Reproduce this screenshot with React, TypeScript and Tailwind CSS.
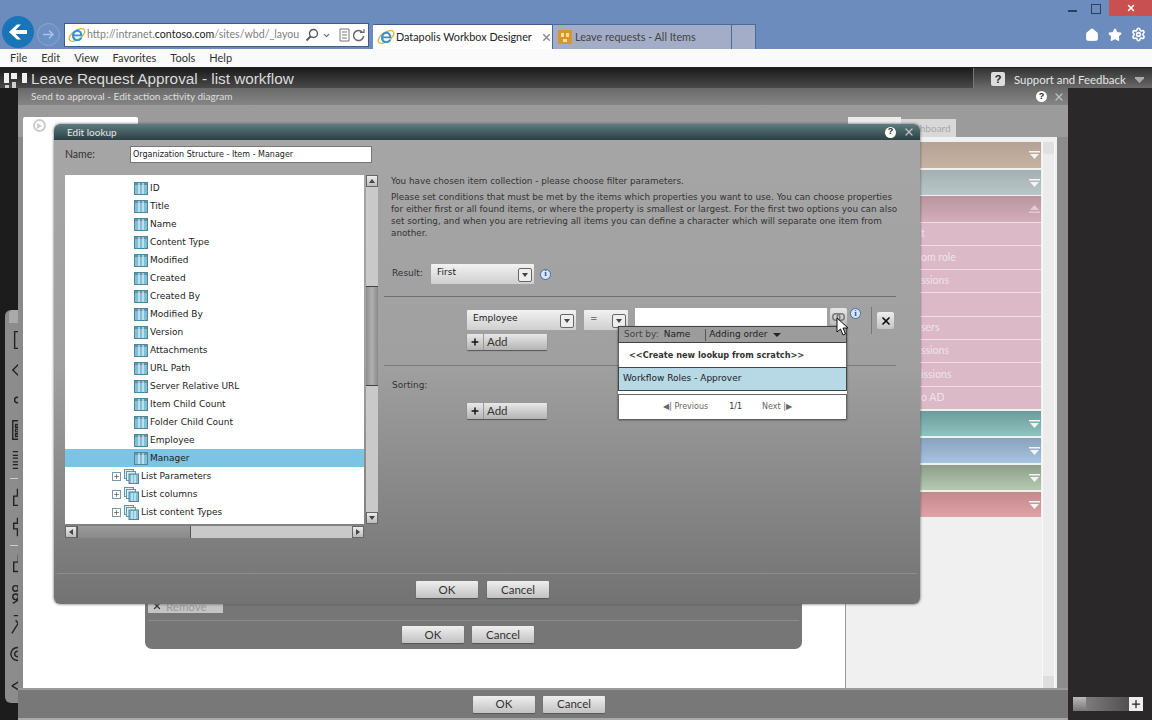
import { ChevronDown, House, Plus, Settings, Star, X } from "lucide-react";

const ui = "font-['DejaVu_Sans',sans-serif]";
const seg = "font-['Lato',sans-serif]";

const treeFields = [
  "ID",
  "Title",
  "Name",
  "Content Type",
  "Modified",
  "Created",
  "Created By",
  "Modified By",
  "Version",
  "Attachments",
  "URL Path",
  "Server Relative URL",
  "Item Child Count",
  "Folder Child Count",
  "Employee",
  "Manager",
];

const accordions = [
  { cls: "h-[26px] mb-[2px] from-[#b3a296] to-[#c8b3a1]" },
  { cls: "h-[25px] mb-px from-[#a5afb2] to-[#b9c7c8]" },
];

const lowerAccordions = [
  "h-[25px] mb-[2px] from-[#6d9b9b] to-[#8ec4c0]",
  "h-[25px] mb-[2px] from-[#8aa2bd] to-[#a7c3e0]",
  "h-[25px] mb-[2px] from-[#8d9e8a] to-[#b6cab2]",
  "h-[25px] from-[#c2898b] to-[#e0a3a8]",
];

const pinkRows = ["t", "om role", "ssions", "", "sers", "ssions", "issions", "o AD"];

function IeLogo({ size = 18 }: { size?: number }) {
  return (
    <svg width={size} height={size} viewBox="0 0 20 20" className="shrink-0">
      <ellipse cx="10" cy="10" rx="10" ry="5" transform="rotate(-35 10 10)" fill="none" stroke="#e0b84a" strokeWidth="1.6" />
      <path
        d="M16 11.5H7c.2 2 1.6 3.2 3.4 3.2 1.4 0 2.4-.6 3-1.7h2.5c-.8 2.4-2.9 3.8-5.5 3.8C6.800 16.800 4.500 14.300 4.500 10.700 4.500 7 6.900 4.300 10.300 4.300c3.500 0 5.800 2.700 5.700 7.200ZM7.100 9.500h6.400c-.2-1.800-1.500-3-3.100-3-1.700 0-3 1.200-3.300 3Z"
        fill="#2f93d8"
      />
    </svg>
  );
}

function BrowserBar() {
  return (
    <div className="h-[49px] bg-[#6c8cbe] flex items-end shrink-0 relative">
      <div className="w-[32px] h-[32px] ml-[2px] mb-px rounded-full bg-[#1a75b8] flex items-center justify-center shrink-0">
        <svg width="22" height="18" viewBox="0 0 22 18">
          <path d="M2 9 10 1.500h4L8.500 7H20v4H8.500l5.500 5.500h-4Z" fill="#fff" />
        </svg>
      </div>
      <div className="w-[23px] h-[23px] ml-[3px] mb-[3px] rounded-full border border-[#8aa6d0] bg-[#6a90c6] flex items-center justify-center shrink-0">
        <svg width="13" height="11" viewBox="0 0 13 11">
          <path d="M1 5.500h10M7 1.500l4 4-4 4" fill="none" stroke="#a9c3e6" strokeWidth="1.500" />
        </svg>
      </div>
      <div className="w-[305px] h-[24px] ml-[4px] mb-[2px] bg-white border border-[#3f5d8a] flex items-center pl-[3px] shrink-0">
        <IeLogo />
        <span className={`${seg} text-[10.600px] text-[#7f7f7f] ml-px w-[218px] whitespace-nowrap`}>
          http://intranet.<span className="text-[#222]">contoso.com</span>/sites/wbd/_layou
        </span>
        <svg width="14" height="14" viewBox="0 0 14 14" className="shrink-0">
          <circle cx="8.500" cy="5.500" r="4" fill="none" stroke="#555" strokeWidth="1.400" />
          <path d="M5.500 8.500 1.500 12.500" stroke="#555" strokeWidth="1.800" />
        </svg>
        <ChevronDown size={9} className="text-[#666] ml-[3px] shrink-0" strokeWidth={3} />
        <svg width="11" height="14" viewBox="0 0 11 14" className="ml-[8px] shrink-0">
          <path d="M1 1h9v12H1Z" fill="none" stroke="#777" />
          <path d="M3 4h5M3 7h5M3 10h5" stroke="#777" />
        </svg>
        <svg width="13" height="13" viewBox="0 0 13 13" className="ml-[2px] shrink-0">
          <path d="M10.500 3.500A5 5 0 1 0 11.500 7" fill="none" stroke="#666" strokeWidth="1.500" />
          <path d="M8 3.500h4V0" fill="none" stroke="#666" strokeWidth="1.200" />
        </svg>
      </div>
      <div className="w-[179px] h-[25px] ml-[4px] bg-white border-t border-[#3f5d8a] flex items-center pl-[4px] shrink-0">
        <IeLogo />
        <span className={`${seg} text-[10.800px] text-[#222] ml-[1px] w-[149px] whitespace-nowrap`}>Datapolis Workbox Designer</span>
        <X size={11} className="text-[#8a8a8a] shrink-0" strokeWidth={3} />
      </div>
      <div className="w-[180px] h-[25px] bg-[#a3adc8] border border-b-0 border-[#4b6a98] flex items-center pl-[5px] shrink-0">
        <svg width="14" height="14" viewBox="0 0 14 14">
          <rect width="14" height="14" rx="1" fill="#d8962f" />
          <path d="M3 3h3v4H3ZM8 3h3v4H8ZM5 9h4v3H5Z" fill="#f8e08a" />
        </svg>
        <span className={`${seg} text-[10.800px] text-[#444] ml-[3px] whitespace-nowrap`}>Leave requests - All Items</span>
      </div>
      <div className="w-[24px] h-[25px] bg-[#a3adc8] border border-l-0 border-b-0 border-[#4b6a98] shrink-0" />
      <div className="absolute right-0 top-0 h-[17px] flex items-start">
        <div className="w-[9px] h-[2px] bg-[#2d3f5c] mt-[10px]" />
        <div className="w-[10px] h-[10px] border border-[#2d3f5c] mt-[4px] ml-[14px]" />
        <div className="w-[43px] h-[16px] bg-[#c95050] ml-[8px] flex items-center justify-center">
          <X size={10} className="text-white" strokeWidth={3.500} />
        </div>
      </div>
      <div className="absolute right-[6px] top-[27px] flex items-center gap-[9px] text-white">
        <House size={14} fill="#fff" strokeWidth={2} />
        <Star size={14} fill="#fff" />
        <Settings size={15} strokeWidth={2.500} />
      </div>
    </div>
  );
}

function MenuBar() {
  return (
    <div className={`${seg} h-[19px] bg-[#fafafa] flex items-center pl-[10px] gap-[14px] text-[11px] text-[#333] shrink-0 border-b border-[#222]`}>
      <span>File</span>
      <span>Edit</span>
      <span>View</span>
      <span>Favorites</span>
      <span>Tools</span>
      <span>Help</span>
    </div>
  );
}

function AppHeader() {
  return (
    <div className="h-[20px] bg-linear-to-b from-[#1c1c1c] to-[#4a4a4a] flex items-center shrink-0 pl-[4px]">
      <svg width="24" height="20" viewBox="0 0 24 20" className="shrink-0">
        <path d="M0 5h5v10H0ZM7 5h6v6H7ZM18 5h5v10h-5Z" fill="#f0f0f0" />
        <path d="M8 14h4v6H8ZM1 17h4v3H1Z" fill="#cfcfcf" />
      </svg>
      <span className="font-['Liberation_Sans',sans-serif] text-[15.300px] text-[#dcdcdc] ml-[3px] pt-[3px] whitespace-nowrap">
        Leave Request Approval - list workflow
      </span>
      <div className="ml-auto w-[179px] h-full border-l border-[#777] bg-linear-to-b from-[#333] to-[#6a6a6a] flex items-center pl-[17px]">
        <div className="w-[14px] h-[14px] mt-[2px] bg-[#ddd] rounded-[2px] text-[11px] font-bold text-[#222] flex items-center justify-center font-['Liberation_Sans',sans-serif]">
          ?
        </div>
        <span className={`${seg} text-[11.400px] text-[#e6e6e6] ml-[9px] pt-[3px] whitespace-nowrap`}>Support and Feedback</span>
        <svg width="9" height="6" viewBox="0 0 9 6" className="ml-[9px] mt-[3px]">
          <path d="M0 0h9v1.500L4.500 6 0 1.500Z" fill="#aaa" />
        </svg>
      </div>
    </div>
  );
}

function ToolIcon({ i }: { i: number }) {
  const paths = [
    "M5 3h8v18H5Z",
    "M12 3 3 12l9 9",
    "M5 12a3 3 0 1 0 6 0a3 3 0 1 0-6 0M11 10 14 2",
    "M3 2h10v20H3ZM6 6h3v3H6ZM6 11h3v3H6ZM6 16h3v3H6Z",
    "M3 3h9v4H3M3 10h9v4H3M3 17h9v4H3",
    "M8 3v8M4 11h9v10H4Z",
    "M8 2v6M4 8h9v6H4ZM8 14v8",
    "M9 2v8M4 10h9v10H4Z",
    "M6 3a3 3 0 1 1 0 6a3 3 0 1 1 0-6M6 12a3 3 0 1 1 0 6a3 3 0 1 1 0-6M3 22l10-6",
    "M2 22 14 3M6 8l8 9M4 3h7",
    "M8 5a7 7 0 1 0 .1 0M8 9a3 3 0 1 0 .1 0",
    "M2 14l10-6M2 14l10 6",
  ];
  return (
    <svg width="13" height="24" viewBox="0 0 14 24" className="shrink-0">
      <path d={paths[i]} fill="none" stroke="#222" strokeWidth="1.500" />
    </svg>
  );
}

function Toolbox() {
  return (
    <div className="absolute left-[5px] top-[222px] w-[17px] h-[393px] bg-[#8c8c8c] rounded-l-[6px] overflow-hidden flex flex-col items-start pl-[5px]">
      <div className="w-[12px] h-[13px] -ml-[1px] bg-[#aaa] rounded-tl-[4px] shrink-0" />
      <div className="flex flex-col items-start gap-[6px] mt-[5px]">
        {[0, 1, 2, 3, 4].map((i) => (
          <ToolIcon key={i} i={i} />
        ))}
        <div className="w-[14px] h-px bg-[#ccc]" />
        {[5, 6].map((i) => (
          <ToolIcon key={i} i={i} />
        ))}
        <div className="w-[14px] h-px bg-[#ccc]" />
        {[7, 8, 9, 10, 11].map((i) => (
          <ToolIcon key={i} i={i} />
        ))}
      </div>
    </div>
  );
}

function DialogButton({ label, cls = "" }: { label: string; cls?: string }) {
  return (
    <div
      className={`${seg} w-[62px] h-[17px] bg-linear-to-b from-[#efefef] to-[#c2c2c2] rounded-[1px] shadow-[0_1px_1px_#555] flex items-center justify-center text-[11.500px] text-[#333] ${cls}`}
    >
      {label}
    </div>
  );
}

function TitleTools({ gap = "gap-[7px]" }: { gap?: string }) {
  return (
    <div className={`ml-auto flex items-center ${gap}`}>
      <div className="w-[11px] h-[11px] rounded-full bg-white text-[#222] text-[9px] font-bold flex items-center justify-center font-['Liberation_Sans',sans-serif]">
        ?
      </div>
      <X size={12} className="text-[#b8c4c4]" strokeWidth={2.500} />
    </div>
  );
}

function Chevron({ up = false }: { up?: boolean }) {
  return (
    <svg width="11" height="8" viewBox="0 0 11 8" className={`shrink-0 ${up ? "rotate-180" : ""}`}>
      <path d="M0 0h11v1.500H0ZM1 3h9L5.500 8Z" fill={up ? "#e7c9d3" : "#f4f4f4"} />
    </svg>
  );
}

function OuterWindow() {
  return (
    <div className="absolute left-[18px] top-0 w-[1050px] h-[632px] flex flex-col">
      <div className="h-[17px] bg-linear-to-b from-[#6a6a6a] to-[#858585] flex items-center pl-[13px] pr-[3px] shrink-0">
        <span className={`${seg} text-[10px] text-[#dedede]`}>Send to approval - Edit action activity diagram</span>
        <TitleTools gap="gap-[6px]" />
      </div>
      <div className="h-[32px] bg-[#9b9b9b] flex items-end pl-[5px] shrink-0">
        <div className="w-[115px] h-[20px] bg-white rounded-t-[2px] flex items-start pl-[10px] pt-[2px]">
          <div className="w-[13px] h-[13px] rounded-full border-2 border-[#ccc] flex items-center justify-center">
            <div className="w-0 h-0 border-y-[3px] border-y-transparent border-l-[5px] border-l-[#ccc]" />
          </div>
        </div>
        <div className="w-[53px] h-[20px] bg-[#ececec] ml-[710px]" />
        <div className={`${seg} w-[55px] h-[18px] bg-[#d8d8d8] text-[10px] text-[#aaa] flex items-center pl-[2px]`}>Dashboard</div>
      </div>
      <div className="flex-1 flex min-h-0 pl-[5px] bg-[#8a8a8a]">
        <div className="w-[823px] bg-white border-r border-[#999]" />
        <div className="w-[211px] bg-[#f0f0f0] flex pt-[5px]">
          <div className="w-[195px] flex flex-col">
            {accordions.map((a) => (
              <div key={a.cls} className={`${a.cls} bg-linear-to-b flex items-center justify-end pr-[1px] shrink-0`}>
                <Chevron />
              </div>
            ))}
            <div className="h-[26px] bg-linear-to-b from-[#b8959f] to-[#d3aebb] flex items-center justify-end pr-[1px] shrink-0">
              <Chevron up />
            </div>
            {pinkRows.map((t, i) => (
              <div
                key={i}
                className={`${seg} h-[23.400px] shrink-0 bg-[#dcb9c6] border-t border-[#f4dde6] flex items-center pl-[75px] text-[10.500px] text-[#f0e3e8]`}
              >
                {t}
              </div>
            ))}
            <div className="h-[2px] shrink-0" />
            {lowerAccordions.map((c) => (
              <div key={c} className={`${c} bg-linear-to-b flex items-center justify-end pr-[1px] shrink-0`}>
                <Chevron />
              </div>
            ))}
          </div>
          <div className="w-[13px] ml-[1px] bg-[#ececec] border-x border-[#f8f8f8] flex flex-col justify-between">
            <div className="h-[12px] bg-[#e0e0e0]" />
            <div className="h-[12px] bg-[#dedede]" />
          </div>
        </div>
        <div className="flex-1 bg-[#8c8c8c]" />
      </div>
      <div className="h-[32px] shrink-0 border-t-2 border-b-2 border-t-[#9a9a9a] border-b-[#a8a8a8] bg-[#787878] flex items-center gap-[8px] pl-[455px]">
        <DialogButton label="OK" />
        <DialogButton label="Cancel" />
      </div>
    </div>
  );
}

function MiddleWindow() {
  return (
    <div className="absolute left-[145px] top-[500px] w-[657px] h-[61px] bg-[#767676] rounded-b-[7px] flex flex-col">
      <div className="h-[32px] pl-[3px] shrink-0">
        <div className="w-[75px] h-[25px] bg-[#c4c4c4] flex items-end pb-0">
          <X size={10} className="text-[#333] ml-[4px] mb-[2px]" strokeWidth={3} />
          <span className={`${seg} text-[11.500px] text-[#999] ml-[4px] leading-[13px]`}>Remove</span>
        </div>
      </div>
      <div className="border-t border-[#8c8c8c] mx-[3px] flex items-start gap-[8px] pl-[254px] pt-[5px]">
        <DialogButton label="OK" />
        <DialogButton label="Cancel" />
      </div>
    </div>
  );
}

function ColumnIcon() {
  return (
    <svg width="14" height="13" viewBox="0 0 14 13" className="shrink-0">
      <rect x="0.500" y="0.500" width="13" height="12" fill="#7fc0d6" stroke="#4f8698" />
      <rect x="1" y="1" width="12" height="2" fill="#5b96ac" />
      <path d="M5 1v11M9 1v11" stroke="#fff" strokeWidth="1" />
    </svg>
  );
}

function GroupIcon() {
  return (
    <svg width="15" height="15" viewBox="0 0 15 15" className="shrink-0">
      <rect x="0.500" y="0.500" width="9" height="9" fill="#dff0f6" stroke="#5c96aa" />
      <rect x="2.500" y="2.500" width="9" height="9" fill="#dff0f6" stroke="#5c96aa" />
      <rect x="5" y="5" width="9.500" height="9.500" fill="#7fc0d6" stroke="#4f8698" />
      <path d="M8 6v8M11 6v8" stroke="#fff" />
    </svg>
  );
}

function TreeGroup({ label }: { label: string }) {
  return (
    <div className="h-[18px] flex items-center pl-[47px]">
      <div className="w-[9px] h-[9px] border border-[#7b9aa6] flex items-center justify-center shrink-0">
        <Plus size={7} className="text-[#333]" strokeWidth={2} />
      </div>
      <div className="ml-[3px]">
        <GroupIcon />
      </div>
      <span className={`${ui} text-[9px] text-[#222] ml-[2px] mt-[2px]`}>{label}</span>
    </div>
  );
}

function ScrollArrow({ dir }: { dir: "up" | "down" | "left" | "right" }) {
  const rot = { up: "", down: "rotate-180", left: "-rotate-90", right: "rotate-90" }[dir];
  return (
    <div className="w-[12px] h-[12px] bg-linear-to-b from-[#eee] to-[#bbb] border border-[#666] flex items-center justify-center shrink-0">
      <div className={`w-0 h-0 border-x-[3px] border-x-transparent border-b-[4px] border-b-[#444] ${rot}`} />
    </div>
  );
}

function Tree() {
  return (
    <div className="flex flex-col shrink-0 w-[313px]">
      <div className="flex h-[349px]">
        <div className="w-[299px] bg-white pt-[4px] overflow-hidden">
          {treeFields.map((f) => (
            <div key={f} className={`h-[18px] flex items-center pl-[69px] ${f === "Manager" ? "bg-[#7cc4e4]" : ""}`}>
              <ColumnIcon />
              <span className={`${ui} text-[9px] text-[#222] ml-[2px] mt-[2px]`}>{f}</span>
            </div>
          ))}
          <TreeGroup label="List Parameters" />
          <TreeGroup label="List columns" />
          <TreeGroup label="List content Types" />
        </div>
        <div className="ml-[2px] w-[12px] flex flex-col bg-[#c9c9c9]">
          <ScrollArrow dir="up" />
          <div className="h-[99px]" />
          <div className="h-[100px] bg-linear-to-r from-[#8f8f8f] via-[#b0b0b0] to-[#8a8a8a] border-y border-[#444]" />
          <div className="flex-1" />
          <ScrollArrow dir="down" />
        </div>
      </div>
      <div className="flex h-[12px] w-[299px] mt-[2px] bg-[#c9c9c9]">
        <ScrollArrow dir="left" />
        <div className="w-[114px] bg-linear-to-b from-[#9a9a9a] to-[#8a8a8a] border-x border-[#555]" />
        <div className="flex-1" />
        <ScrollArrow dir="right" />
      </div>
    </div>
  );
}

function SelectBox({ label, cls }: { label: string; cls: string }) {
  return (
    <div className={`${ui} h-[20px] bg-linear-to-b from-[#f2f2f2] to-[#cfcfcf] rounded-[1px] flex items-start pl-[6px] pt-[2px] text-[9px] text-[#222] shrink-0 relative ${cls}`}>
      {label}
      <div className="absolute right-[2px] top-[4px] w-[14px] h-[14px] border border-[#666] rounded-[2px] bg-[#eee] flex items-center justify-center">
        <div className="w-0 h-0 border-x-[3px] border-x-transparent border-t-[4px] border-t-[#444]" />
      </div>
    </div>
  );
}

function InfoIcon() {
  return (
    <div className="w-[11px] h-[11px] rounded-full border border-[#3d6db0] bg-[#dbe6f4] text-[#2a5aa0] text-[9px] font-bold flex items-center justify-center font-['Liberation_Serif',serif] shrink-0">
      i
    </div>
  );
}

function AddButton() {
  return (
    <div className={`${seg} w-[80px] h-[16px] bg-linear-to-b from-[#e8e8e8] to-[#b4b4b4] rounded-[1px] shadow-[0_1px_1px_#555] flex items-center text-[11.500px] text-[#333]`}>
      <div className="w-[17px] h-full flex items-center justify-center border-r border-[#999]">
        <Plus size={10} className="text-[#111]" strokeWidth={3.500} />
      </div>
      <span className="ml-[3px]">Add</span>
    </div>
  );
}

function LookupMenu() {
  return (
    <div className={`${ui} absolute left-[234px] top-[151px] w-[229px] flex flex-col text-[9px] text-[#333] shadow-[0_1px_2px_#444]`}>
      <div className="h-[17px] bg-[#9c9c9c] border border-[#444] flex items-center pl-[5px]">
        <span className="text-[#444]">Sort by:</span>
        <span className="ml-[5px] text-[#222]">Name</span>
        <div className="w-px h-[12px] bg-[#555] ml-[15px]" />
        <span className="ml-[3px] text-[#222]">Adding order</span>
        <div className="ml-[5px] w-0 h-0 border-x-[4px] border-x-transparent border-t-[4px] border-t-[#222]" />
      </div>
      <div className="h-[24px] bg-white border-x border-[#666] flex items-center pl-[10px] font-bold text-[8.200px] text-[#333] whitespace-nowrap">
        {"<<Create new lookup from scratch>>"}
      </div>
      <div className="h-[24px] bg-[#b7d8e5] border border-[#444] flex items-center pl-[4px] text-[#222]">Workflow Roles - Approver</div>
      <div className="h-[3px] bg-white" />
      <div className="h-px bg-[#666]" />
      <div className="h-[24px] bg-white border-x border-[#666] flex items-center pl-[44px] text-[8px] text-[#666]">
        <span>◀| Previous</span>
        <span className="ml-[21px] text-[#333]">1/1</span>
        <span className="ml-[20px]">Next |▶</span>
      </div>
    </div>
  );
}

function LinkGlyph() {
  return (
    <svg width="13" height="8" viewBox="0 0 13 8">
      <rect x="0.800" y="0.800" width="7" height="6.400" rx="3" fill="none" stroke="#777" strokeWidth="1.500" />
      <rect x="5.200" y="0.800" width="7" height="6.400" rx="3" fill="none" stroke="#777" strokeWidth="1.500" />
    </svg>
  );
}

function RightPane() {
  return (
    <div className="flex-1 relative ml-[6px]">
      <div className={`${ui} pl-[7px] text-[8.800px] leading-[12px] text-[#333] whitespace-nowrap`}>
        <p>You have chosen item collection - please choose filter parameters.</p>
        <p className="mt-[4px]">
          Please set conditions that must be met by the items which properties you want to use. You can choose properties
          <br />
          for either first or all found items, or where the property is smallest or largest. For the first two options you can also
          <br />
          set sorting, and when you are retrieving all items you can define a character which will separate one item from
          <br />
          another.
        </p>
      </div>
      <div className="flex items-center mt-[25px] pl-[8px]">
        <span className={`${ui} text-[9px] text-[#333] w-[39px]`}>Result:</span>
        <SelectBox label="First" cls="w-[103px]" />
        <div className="ml-[6px]">
          <InfoIcon />
        </div>
      </div>
      <div className="h-px bg-[#6f6f6f] mt-[12px] mr-[2px]" />
      <div className="flex items-start mt-[13px] pl-[83px] h-[26px]">
        <SelectBox label="Employee" cls="w-[109px]" />
        <SelectBox label="=" cls="w-[44px] ml-[8px]" />
        <div className="w-[192px] h-[18px] -mt-[2px] bg-white ml-[7px]" />
        <div className="w-[17px] h-[17px] -mt-[2px] ml-[3px] bg-linear-to-b from-[#e8e8e8] to-[#bbb] rounded-[2px] flex items-center justify-center">
          <LinkGlyph />
        </div>
        <div className="ml-[3px] -mt-[2px]">
          <InfoIcon />
        </div>
        <div className="w-px h-[27px] bg-[#777] -mt-[3px] ml-[10px]" />
        <div className="w-[17px] h-[17px] ml-[5px] mt-[2px] bg-linear-to-b from-[#eee] to-[#c4c4c4] rounded-[2px] flex items-center justify-center">
          <X size={12} className="text-[#111]" strokeWidth={3.500} />
        </div>
      </div>
      <div className="pl-[83px] -mt-[2px]">
        <AddButton />
      </div>
      <div className="h-px bg-[#7b7b7b] mt-[15px] mr-[2px]" />
      <div className={`${ui} text-[9px] text-[#333] pl-[8px] mt-[13px]`}>Sorting:</div>
      <div className="pl-[83px] mt-[10px]">
        <AddButton />
      </div>
      <LookupMenu />
      <svg width="14" height="19" viewBox="0 0 14 19" className="absolute left-[452px] top-[142px]">
        <path d="M1 1v14l3.500-3 2.500 6 2.500-1-2.500-6h5Z" fill="#fff" stroke="#111" />
      </svg>
    </div>
  );
}

function LookupWindow() {
  return (
    <div className="absolute left-[54px] top-[36px] w-[866px] h-[480px] rounded-[6px] overflow-hidden shadow-[0_0_3px_#555] flex flex-col bg-linear-to-b from-[#a6a6a6] via-[#a0a0a0] to-[#737373]">
      <div className="h-[16px] rounded-t-[6px] bg-linear-to-b from-[#5f7c80] to-[#2b4044] flex items-center pl-[13px] pr-[5px] shrink-0">
        <span className={`${seg} text-[10px] text-[#e6e6e6] pt-px`}>Edit lookup</span>
        <TitleTools />
      </div>
      <div className="flex items-center pl-[11px] mt-[6px] shrink-0">
        <span className={`${seg} text-[10.500px] text-[#333] w-[65px]`}>Name:</span>
        <div className={`${ui} w-[242px] h-[17px] bg-white border border-[#777] flex items-center pl-[2px] text-[8px] text-[#222] whitespace-nowrap`}>
          Organization Structure - Item - Manager
        </div>
      </div>
      <div className="flex mt-[12px] pl-[11px] pr-[22px] shrink-0 h-[399px]">
        <Tree />
        <RightPane />
      </div>
      <div className="border-t border-[#8e8e8e] flex items-start gap-[9px] pl-[359px] pt-[7px] -mt-[1px] mx-[3px] h-[30px]">
        <DialogButton label="OK" />
        <DialogButton label="Cancel" />
      </div>
    </div>
  );
}

function ZoomSlider() {
  return (
    <div className="absolute left-[1073px] top-[609px] w-[70px] h-[14px] flex bg-linear-to-r from-[#8a8a8a] to-[#444]">
      <div className="w-[13px] h-full bg-linear-to-b from-[#bbb] to-[#777]" />
      <div className="ml-auto w-[14px] h-full bg-[#eee] flex items-center justify-center">
        <Plus size={12} className="text-[#222]" strokeWidth={2.500} />
      </div>
    </div>
  );
}

export default function App() {
  return (
    <div className="w-[1152px] h-[720px] overflow-hidden flex flex-col bg-[#2a2829]">
      <BrowserBar />
      <MenuBar />
      <AppHeader />
      <div className="relative flex-1 bg-[#2a2829]">
        <div className="absolute left-0 top-0 w-[18px] h-full bg-[#1c1c1c]" />
        <Toolbox />
        <OuterWindow />
        <MiddleWindow />
        <LookupWindow />
        <ZoomSlider />
      </div>
    </div>
  );
}
